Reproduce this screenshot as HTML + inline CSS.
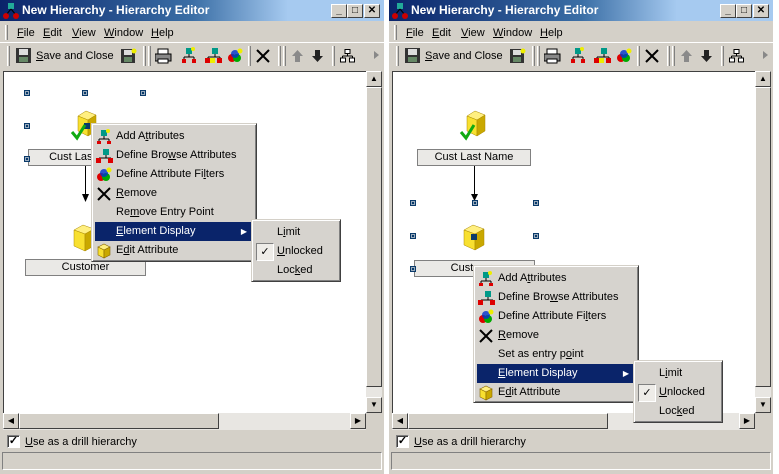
<!DOCTYPE html>
<html><head><style>
*{margin:0;padding:0;box-sizing:border-box}
body{width:779px;height:474px;background:#fff;position:relative;overflow:hidden;font-family:"Liberation Sans",sans-serif;font-size:11px;color:#000}
.win{position:absolute;top:0;width:384px;height:474px;background:#d4d0c8}
.a{position:absolute}
.title{left:0;top:0;width:384px;height:21px;background:linear-gradient(90deg,#0a246a 0%,#3a6ea5 50%,#a6caf0 75%,#a6caf0 100%)}
.title span{position:absolute;left:22px;top:3px;color:#fff;font-weight:bold;font-size:12px}
.tb{width:16px;height:14px;top:4px;background:#d4d0c8;border:1px solid;border-color:#fff #404040 #404040 #fff;font-size:10px;font-weight:bold;text-align:center;line-height:12px}
.menu span{position:absolute;top:27px;font-size:11px}
.grip{width:3px;border-left:1px solid #fff;border-right:1px solid #808080}
.canvas{left:3px;top:71px;width:363px;height:342px;background:#fff;border-top:1px solid #404040;border-left:1px solid #404040}
.vs{left:366px;top:71px;width:16px;height:342px;background:#e8e6e2}
.sb{width:16px;height:16px;background:#d4d0c8;border:1px solid;border-color:#fff #404040 #404040 #fff}
.hs{left:3px;top:413px;width:363px;height:17px;background:#e8e6e2}
.h{width:6px;height:6px;background:#0a3a6a;border:1px solid #0a3a6a;box-shadow:inset 0 0 0 1px #9ab}
.box{height:17px;background:#eae9e6;border:1px solid #808080;text-align:center;line-height:15px;font-size:11px}
.cm{background:#d6d3ce;border:1px solid;border-color:#d4d0c8 #404040 #404040 #d4d0c8;box-shadow:inset 1px 1px 0 #fff,inset -1px -1px 0 #808080}
.it{position:absolute;left:3px;right:3px;height:19px;line-height:19px;padding-left:21px}
.it.sel{background:#0a246a;color:#fff}
.sub .it{padding-left:22px}
u{text-decoration:underline}
.status{left:2px;top:452px;width:380px;height:18px;border:1px solid;border-color:#808080 #fff #fff #808080}
.chk{left:7px;top:435px;width:13px;height:13px;background:#fff;border:1px solid;border-color:#808080 #fff #fff #808080;box-shadow:inset 1px 1px 0 #404040;font-size:11px;line-height:11px;text-align:center;font-weight:bold}
</style></head><body>

<!-- LEFT WINDOW -->
<div class="win" style="left:0">
 <div class="a title"><svg class="a" style="left:3px;top:3px" width="16" height="16"><rect x="5" y="0" width="6" height="6" fill="#2a9"/><line x1="8" y1="6" x2="3" y2="12" stroke="#000"/><line x1="8" y1="6" x2="13" y2="12" stroke="#000"/><circle cx="3" cy="13" r="3" fill="#c00"/><circle cx="13" cy="13" r="3" fill="#c00"/></svg><span>New Hierarchy - Hierarchy Editor</span></div>
 <div class="a tb" style="left:331px">_</div><div class="a tb" style="left:347px">□</div><div class="a tb" style="left:364px">✕</div>
 <div class="a grip" style="left:5px;top:25px;height:15px"></div>
 <div class="menu"><span style="left:17px"><u>F</u>ile</span><span style="left:43px"><u>E</u>dit</span><span style="left:72px"><u>V</u>iew</span><span style="left:104px"><u>W</u>indow</span><span style="left:151px"><u>H</u>elp</span></div>
 <div class="a" style="left:0;top:42px;width:384px;height:1px;background:#fff"></div>
 <div class="a grip" style="left:7px;top:46px;height:20px"></div>
 <svg class="a" style="left:16px;top:48px" width="16" height="16"><rect x="0" y="0" width="15" height="15" fill="#333"/><rect x="3" y="1" width="9" height="6" fill="#ddd"/><rect x="3" y="9" width="9" height="5" fill="#686"/></svg>
 <span class="a" style="left:36px;top:50px;font-size:11px"><u>S</u>ave and Close</span>
 <svg class="a" style="left:121px;top:48px" width="16" height="16"><rect x="0" y="1" width="14" height="14" fill="#333"/><rect x="3" y="2" width="8" height="5" fill="#ddd"/><rect x="3" y="9" width="8" height="5" fill="#686"/><circle cx="13" cy="3" r="2.5" fill="#ee0"/></svg>
 <div class="a grip" style="left:143px;top:46px;height:20px"></div><div class="a grip" style="left:148px;top:46px;height:20px"></div>
 <svg class="a" style="left:155px;top:48px" width="17" height="16"><rect x="3" y="1" width="10" height="5" fill="#fff" stroke="#000"/><rect x="0" y="6" width="16" height="7" fill="#888" stroke="#000"/><rect x="3" y="11" width="10" height="4" fill="#fff" stroke="#000"/></svg>
 <svg class="a" style="left:181px;top:47px" width="16" height="17"><rect x="5" y="1" width="6" height="6" fill="#098"/><path d="M8 7v3M3 10h10M3 10v3M13 10v3" stroke="#000" fill="none"/><rect x="1" y="12" width="4" height="4" fill="#d00"/><rect x="11" y="12" width="4" height="4" fill="#d00"/><circle cx="12" cy="2" r="2" fill="#ee0"/></svg>
 <svg class="a" style="left:204px;top:47px" width="18" height="17"><rect x="8" y="1" width="6" height="6" fill="#098"/><path d="M11 7v3M4 10h12M4 10v3M16 10v3" stroke="#000" fill="none"/><rect x="1" y="11" width="5" height="5" fill="#d00"/><rect x="13" y="11" width="5" height="5" fill="#d00"/><rect x="6" y="11" width="5" height="5" fill="#ee0"/></svg>
 <svg class="a" style="left:227px;top:48px" width="16" height="16"><circle cx="5" cy="10" r="4" fill="#d00"/><circle cx="10" cy="10" r="4" fill="#0a0"/><circle cx="8" cy="6" r="4" fill="#03c" fill-opacity=".8"/><circle cx="13" cy="3" r="2.5" fill="#ee0"/></svg>
 <div class="a grip" style="left:248px;top:46px;height:20px"></div>
 <svg class="a" style="left:256px;top:49px" width="14" height="14"><path d="M1 1L13 13M13 1L1 13" stroke="#000" stroke-width="2"/></svg>
 <div class="a grip" style="left:278px;top:46px;height:20px"></div><div class="a grip" style="left:283px;top:46px;height:20px"></div>
 <svg class="a" style="left:291px;top:49px" width="13" height="14"><path d="M6.5 1L12 7H9V13H4V7H1Z" fill="#8a8a8a"/></svg>
 <svg class="a" style="left:311px;top:49px" width="13" height="14"><path d="M6.5 13L12 7H9V1H4V7H1Z" fill="#222"/></svg>
 <div class="a grip" style="left:332px;top:46px;height:20px"></div>
 <svg class="a" style="left:340px;top:49px" width="15" height="14"><rect x="5" y="0.5" width="5" height="4" fill="#fff" stroke="#000"/><path d="M7.5 4.5V7M2.5 7H12.5M2.5 7V9M12.5 7V9" stroke="#000" fill="none"/><rect x="0.5" y="9" width="5" height="4" fill="#fff" stroke="#000"/><rect x="9.5" y="9" width="5" height="4" fill="#fff" stroke="#000"/></svg>
 <svg class="a" style="left:374px;top:51px" width="6" height="8"><path d="M0 0L5 4L0 8Z" fill="#888"/></svg>
 <div class="a canvas"></div>
 <div class="a vs"><div class="a sb" style="left:0;top:0;font-size:8px;text-align:center;line-height:13px">▲</div><div class="a sb" style="left:0;top:326px;font-size:8px;text-align:center;line-height:13px">▼</div><div class="a sb" style="left:0;top:16px;height:300px"></div></div>
 <div class="a hs"><div class="a sb" style="left:0;top:0;font-size:8px;text-align:center;line-height:13px">◀</div><div class="a sb" style="left:16px;top:0;width:200px"></div><div class="a sb" style="left:347px;top:0;font-size:8px;text-align:center;line-height:13px">▶</div></div>
 <div class="a" style="left:366px;top:413px;width:17px;height:17px;background:#d4d0c8"></div>
 <div class="a h" style="left:24px;top:90px"></div><div class="a h" style="left:82px;top:90px"></div><div class="a h" style="left:140px;top:90px"></div>
 <div class="a h" style="left:24px;top:123px"></div>
 <svg class="a" style="left:70px;top:110px" width="32" height="32"><path d="M8 6L16 1L26 5L18 10Z" fill="#ffef80" stroke="#a80" stroke-width=".5"/><path d="M8 6L18 10V26L8 21Z" fill="#f8e030" stroke="#a80" stroke-width=".5"/><path d="M18 10L26 5V21L18 26Z" fill="#c9a800" stroke="#a80" stroke-width=".5"/><rect x="14" y="13" width="6" height="6" fill="#0a3a6a"/><path d="M2 22L7 28L15 15" stroke="#1a1" stroke-width="3" fill="none"/></svg>
 <div class="a box" style="left:28px;top:149px;width:121px">Cust Last Name</div>
 <div class="a h" style="left:24px;top:156px"></div>
 <div class="a" style="left:85px;top:166px;width:1px;height:30px;background:#000"></div>
 <svg class="a" style="left:82px;top:194px" width="7" height="8"><path d="M0 0H7L3.5 8Z" fill="#000"/></svg>
 <svg class="a" style="left:70px;top:224px" width="32" height="32"><path d="M4 6L13 1L24 5L15 10Z" fill="#ffef80" stroke="#a80" stroke-width=".5"/><path d="M4 6L15 10V27L4 22Z" fill="#f8e030" stroke="#a80" stroke-width=".5"/><path d="M15 10L24 5V22L15 27Z" fill="#c9a800" stroke="#a80" stroke-width=".5"/></svg>
 <div class="a box" style="left:25px;top:259px;width:121px">Customer</div>
 <div class="a cm" style="left:91px;top:123px;width:166px;height:139px">
  <div class="it" style="top:3px">Add A<u>t</u>tributes</div>
  <div class="it" style="top:22px">Define Bro<u>w</u>se Attributes</div>
  <div class="it" style="top:41px">Define Attribute Fi<u>l</u>ters</div>
  <div class="it" style="top:60px"><u>R</u>emove</div>
  <div class="it" style="top:79px">Re<u>m</u>ove Entry Point</div>
  <div class="it sel" style="top:98px"><u>E</u>lement Display<span style="position:absolute;right:6px;font-size:8px">▶</span></div>
  <div class="it" style="top:117px">E<u>d</u>it Attribute</div>
  <svg class="a" style="left:4px;top:5px" width="16" height="16"><rect x="5" y="1" width="6" height="6" fill="#098"/><path d="M8 7v3M3 10h10M3 10v3M13 10v3" stroke="#000" fill="none"/><rect x="1" y="12" width="4" height="3" fill="#d00"/><rect x="11" y="12" width="4" height="3" fill="#d00"/><circle cx="12" cy="2" r="2" fill="#ee0"/></svg>
  <svg class="a" style="left:3px;top:24px" width="18" height="16"><rect x="8" y="1" width="6" height="6" fill="#098"/><path d="M11 7v3M4 10h12" stroke="#000" fill="none"/><rect x="1" y="10" width="5" height="5" fill="#d00"/><rect x="13" y="10" width="5" height="5" fill="#d00"/></svg>
  <svg class="a" style="left:4px;top:43px" width="16" height="16"><circle cx="5" cy="10" r="4" fill="#d00"/><circle cx="10" cy="10" r="4" fill="#0a0"/><circle cx="8" cy="6" r="4" fill="#03c" fill-opacity=".8"/><circle cx="13" cy="3" r="2.5" fill="#ee0"/></svg>
  <svg class="a" style="left:5px;top:63px" width="14" height="14"><path d="M1 1L13 13M13 1L1 13" stroke="#000" stroke-width="2"/></svg>
  <svg class="a" style="left:4px;top:119px" width="16" height="16"><path d="M2 4L8 1L14 4L8 7Z" fill="#ffef80" stroke="#860" stroke-width=".6"/><path d="M2 4L8 7V15L2 12Z" fill="#f8e030" stroke="#860" stroke-width=".6"/><path d="M8 7L14 4V12L8 15Z" fill="#c9a800" stroke="#860" stroke-width=".6"/></svg>
 </div>
 <div class="a cm sub" style="left:251px;top:219px;width:90px;height:63px">
  <div class="it" style="top:3px">L<u>i</u>mit</div>
  <div class="it" style="top:22px"><u>U</u>nlocked</div>
  <div class="it" style="top:41px">Loc<u>k</u>ed</div>
  <div class="a" style="left:4px;top:23px;width:18px;height:18px;background:#eeece8;border:1px solid;border-color:#808080 #fff #fff #808080;text-align:center;line-height:16px">✓</div>
 </div>
 <div class="a chk">✓</div>
 <span class="a" style="left:25px;top:436px;font-size:11px"><u>U</u>se as a drill hierarchy</span>
 <div class="a status"></div>
</div>

<!-- RIGHT WINDOW -->
<div class="win" style="left:389px">
 <div class="a title"><svg class="a" style="left:3px;top:3px" width="16" height="16"><rect x="5" y="0" width="6" height="6" fill="#2a9"/><line x1="8" y1="6" x2="3" y2="12" stroke="#000"/><line x1="8" y1="6" x2="13" y2="12" stroke="#000"/><circle cx="3" cy="13" r="3" fill="#c00"/><circle cx="13" cy="13" r="3" fill="#c00"/></svg><span>New Hierarchy - Hierarchy Editor</span></div>
 <div class="a tb" style="left:331px">_</div><div class="a tb" style="left:347px">□</div><div class="a tb" style="left:364px">✕</div>
 <div class="a grip" style="left:5px;top:25px;height:15px"></div>
 <div class="menu"><span style="left:17px"><u>F</u>ile</span><span style="left:43px"><u>E</u>dit</span><span style="left:72px"><u>V</u>iew</span><span style="left:104px"><u>W</u>indow</span><span style="left:151px"><u>H</u>elp</span></div>
 <div class="a" style="left:0;top:42px;width:384px;height:1px;background:#fff"></div>
 <div class="a grip" style="left:7px;top:46px;height:20px"></div>
 <svg class="a" style="left:16px;top:48px" width="16" height="16"><rect x="0" y="0" width="15" height="15" fill="#333"/><rect x="3" y="1" width="9" height="6" fill="#ddd"/><rect x="3" y="9" width="9" height="5" fill="#686"/></svg>
 <span class="a" style="left:36px;top:50px;font-size:11px"><u>S</u>ave and Close</span>
 <svg class="a" style="left:121px;top:48px" width="16" height="16"><rect x="0" y="1" width="14" height="14" fill="#333"/><rect x="3" y="2" width="8" height="5" fill="#ddd"/><rect x="3" y="9" width="8" height="5" fill="#686"/><circle cx="13" cy="3" r="2.5" fill="#ee0"/></svg>
 <div class="a grip" style="left:143px;top:46px;height:20px"></div><div class="a grip" style="left:148px;top:46px;height:20px"></div>
 <svg class="a" style="left:155px;top:48px" width="17" height="16"><rect x="3" y="1" width="10" height="5" fill="#fff" stroke="#000"/><rect x="0" y="6" width="16" height="7" fill="#888" stroke="#000"/><rect x="3" y="11" width="10" height="4" fill="#fff" stroke="#000"/></svg>
 <svg class="a" style="left:181px;top:47px" width="16" height="17"><rect x="5" y="1" width="6" height="6" fill="#098"/><path d="M8 7v3M3 10h10M3 10v3M13 10v3" stroke="#000" fill="none"/><rect x="1" y="12" width="4" height="4" fill="#d00"/><rect x="11" y="12" width="4" height="4" fill="#d00"/><circle cx="12" cy="2" r="2" fill="#ee0"/></svg>
 <svg class="a" style="left:204px;top:47px" width="18" height="17"><rect x="8" y="1" width="6" height="6" fill="#098"/><path d="M11 7v3M4 10h12M4 10v3M16 10v3" stroke="#000" fill="none"/><rect x="1" y="11" width="5" height="5" fill="#d00"/><rect x="13" y="11" width="5" height="5" fill="#d00"/><rect x="6" y="11" width="5" height="5" fill="#ee0"/></svg>
 <svg class="a" style="left:227px;top:48px" width="16" height="16"><circle cx="5" cy="10" r="4" fill="#d00"/><circle cx="10" cy="10" r="4" fill="#0a0"/><circle cx="8" cy="6" r="4" fill="#03c" fill-opacity=".8"/><circle cx="13" cy="3" r="2.5" fill="#ee0"/></svg>
 <div class="a grip" style="left:248px;top:46px;height:20px"></div>
 <svg class="a" style="left:256px;top:49px" width="14" height="14"><path d="M1 1L13 13M13 1L1 13" stroke="#000" stroke-width="2"/></svg>
 <div class="a grip" style="left:278px;top:46px;height:20px"></div><div class="a grip" style="left:283px;top:46px;height:20px"></div>
 <svg class="a" style="left:291px;top:49px" width="13" height="14"><path d="M6.5 1L12 7H9V13H4V7H1Z" fill="#8a8a8a"/></svg>
 <svg class="a" style="left:311px;top:49px" width="13" height="14"><path d="M6.5 13L12 7H9V1H4V7H1Z" fill="#222"/></svg>
 <div class="a grip" style="left:332px;top:46px;height:20px"></div>
 <svg class="a" style="left:340px;top:49px" width="15" height="14"><rect x="5" y="0.5" width="5" height="4" fill="#fff" stroke="#000"/><path d="M7.5 4.5V7M2.5 7H12.5M2.5 7V9M12.5 7V9" stroke="#000" fill="none"/><rect x="0.5" y="9" width="5" height="4" fill="#fff" stroke="#000"/><rect x="9.5" y="9" width="5" height="4" fill="#fff" stroke="#000"/></svg>
 <svg class="a" style="left:374px;top:51px" width="6" height="8"><path d="M0 0L5 4L0 8Z" fill="#888"/></svg>
 <div class="a canvas"></div>
 <div class="a vs"><div class="a sb" style="left:0;top:0;font-size:8px;text-align:center;line-height:13px">▲</div><div class="a sb" style="left:0;top:326px;font-size:8px;text-align:center;line-height:13px">▼</div><div class="a sb" style="left:0;top:16px;height:300px"></div></div>
 <div class="a hs"><div class="a sb" style="left:0;top:0;font-size:8px;text-align:center;line-height:13px">◀</div><div class="a sb" style="left:16px;top:0;width:200px"></div><div class="a sb" style="left:347px;top:0;font-size:8px;text-align:center;line-height:13px">▶</div></div>
 <div class="a" style="left:366px;top:413px;width:17px;height:17px;background:#d4d0c8"></div>
 <svg class="a" style="left:70px;top:110px" width="32" height="32"><path d="M8 6L16 1L26 5L18 10Z" fill="#ffef80" stroke="#a80" stroke-width=".5"/><path d="M8 6L18 10V26L8 21Z" fill="#f8e030" stroke="#a80" stroke-width=".5"/><path d="M18 10L26 5V21L18 26Z" fill="#c9a800" stroke="#a80" stroke-width=".5"/><path d="M2 22L7 28L15 15" stroke="#1a1" stroke-width="3" fill="none"/></svg>
 <div class="a box" style="left:28px;top:149px;width:114px">Cust Last Name</div>
 <div class="a" style="left:85px;top:166px;width:1px;height:32px;background:#000"></div>
 <svg class="a" style="left:82px;top:194px" width="7" height="7"><path d="M0 0H7L3.5 7Z" fill="#000"/></svg>
 <div class="a h" style="left:21px;top:200px"></div><div class="a h" style="left:83px;top:200px"></div><div class="a h" style="left:144px;top:200px"></div>
 <div class="a h" style="left:21px;top:233px"></div><div class="a h" style="left:144px;top:233px"></div>
 <svg class="a" style="left:72px;top:223px" width="30" height="30"><path d="M3 7L12 2L23 6L14 11Z" fill="#ffef80" stroke="#a80" stroke-width=".5"/><path d="M3 7L14 11V27L3 22Z" fill="#f8e030" stroke="#a80" stroke-width=".5"/><path d="M14 11L23 6V22L14 27Z" fill="#c9a800" stroke="#a80" stroke-width=".5"/><rect x="10" y="11" width="6" height="6" fill="#0a3a6a"/></svg>
 <div class="a box" style="left:25px;top:260px;width:121px">Customer</div>
 <div class="a h" style="left:21px;top:266px"></div>
 <div class="a cm" style="left:84px;top:265px;width:166px;height:138px">
  <div class="it" style="top:3px">Add A<u>t</u>tributes</div>
  <div class="it" style="top:22px">Define Bro<u>w</u>se Attributes</div>
  <div class="it" style="top:41px">Define Attribute Fi<u>l</u>ters</div>
  <div class="it" style="top:60px"><u>R</u>emove</div>
  <div class="it" style="top:79px">Set as entry p<u>o</u>int</div>
  <div class="it sel" style="top:98px"><u>E</u>lement Display<span style="position:absolute;right:6px;font-size:8px">▶</span></div>
  <div class="it" style="top:117px">E<u>d</u>it Attribute</div>
  <svg class="a" style="left:4px;top:5px" width="16" height="16"><rect x="5" y="1" width="6" height="6" fill="#098"/><path d="M8 7v3M3 10h10M3 10v3M13 10v3" stroke="#000" fill="none"/><rect x="1" y="12" width="4" height="3" fill="#d00"/><rect x="11" y="12" width="4" height="3" fill="#d00"/><circle cx="12" cy="2" r="2" fill="#ee0"/></svg>
  <svg class="a" style="left:3px;top:24px" width="18" height="16"><rect x="8" y="1" width="6" height="6" fill="#098"/><path d="M11 7v3M4 10h12" stroke="#000" fill="none"/><rect x="1" y="10" width="5" height="5" fill="#d00"/><rect x="13" y="10" width="5" height="5" fill="#d00"/></svg>
  <svg class="a" style="left:4px;top:43px" width="16" height="16"><circle cx="5" cy="10" r="4" fill="#d00"/><circle cx="10" cy="10" r="4" fill="#0a0"/><circle cx="8" cy="6" r="4" fill="#03c" fill-opacity=".8"/><circle cx="13" cy="3" r="2.5" fill="#ee0"/></svg>
  <svg class="a" style="left:5px;top:63px" width="14" height="14"><path d="M1 1L13 13M13 1L1 13" stroke="#000" stroke-width="2"/></svg>
  <svg class="a" style="left:4px;top:119px" width="16" height="16"><path d="M2 4L8 1L14 4L8 7Z" fill="#ffef80" stroke="#860" stroke-width=".6"/><path d="M2 4L8 7V15L2 12Z" fill="#f8e030" stroke="#860" stroke-width=".6"/><path d="M8 7L14 4V12L8 15Z" fill="#c9a800" stroke="#860" stroke-width=".6"/></svg>
 </div>
 <div class="a cm sub" style="left:244px;top:360px;width:90px;height:63px">
  <div class="it" style="top:3px">L<u>i</u>mit</div>
  <div class="it" style="top:22px"><u>U</u>nlocked</div>
  <div class="it" style="top:41px">Loc<u>k</u>ed</div>
  <div class="a" style="left:4px;top:23px;width:18px;height:18px;background:#eeece8;border:1px solid;border-color:#808080 #fff #fff #808080;text-align:center;line-height:16px">✓</div>
 </div>
 <div class="a chk">✓</div>
 <span class="a" style="left:25px;top:436px;font-size:11px"><u>U</u>se as a drill hierarchy</span>
 <div class="a status"></div>
</div>
</body></html>
